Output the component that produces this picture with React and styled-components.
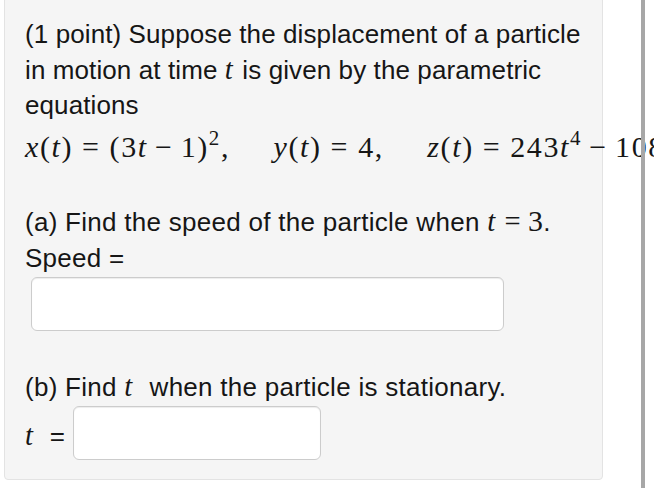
import styled, { createGlobalStyle } from "styled-components";

const GlobalStyle = createGlobalStyle`
  html, body {
    margin: 0;
    padding: 0;
    background: #ffffff;
    overflow: hidden;
  }
  body {
    font-family: "Liberation Sans", Arial, sans-serif;
    color: #161616;
  }
`;

const App = () => {
  return (
    <>
      <GlobalStyle />
      <Page>
        <Card>
          <Prose>
            (1 point) Suppose the displacement of a particle
            <br />
            in motion at time <Var>t</Var> is given by the parametric
            <br />
            equations
          </Prose>
          <MathLine>
            <Var>x</Var>(<Var>t</Var>)<Rel>=</Rel>(3<Var>t</Var>
            <Bin>−</Bin>1)<Sup>2</Sup>,<Quad />
            <Var>y</Var>(<Var>t</Var>)<Rel>=</Rel>4,<Quad />
            <Var>z</Var>(<Var>t</Var>)<Rel>=</Rel>243<Var>t</Var>
            <Sup>4</Sup>
            <Bin>−</Bin>108<Var>t</Var>
            <Sup>2</Sup>
          </MathLine>

          <Question $gap={36}>
            (a) Find the speed of the particle when <Var>t</Var>
            <Rel>=</Rel>
            <Num>3</Num>.
          </Question>
          <Label>Speed =</Label>
          <AnswerInput type="text" $width={473} $indent={6} />

          <Question $gap={38}>
            (b) Find <Var>t</Var>&nbsp; when the particle is stationary.
          </Question>
          <InlineRow>
            <RowLabel>
              <Var>t</Var>&nbsp; =
            </RowLabel>
            <AnswerInput type="text" $width={248} />
          </InlineRow>
        </Card>
        <ScrollBar />
      </Page>
    </>
  );
};

const Page = styled.main`
  position: relative;
  width: 654px;
  height: 495px;
  padding-left: 4px;
  box-sizing: border-box;
`;

const Card = styled.section`
  width: 599px;
  box-sizing: border-box;
  margin-top: -4px;
  padding: 20px 16px 19px 20px;
  background: #f5f5f5;
  border: 1px solid #e3e3e3;
  border-radius: 4px;
  box-shadow: inset 0 1px 1px rgba(0, 0, 0, 0.03);
`;

const Prose = styled.p`
  margin: 0;
  font-size: 26px;
  line-height: 35px;
  letter-spacing: 0.1px;
  white-space: nowrap;
`;

const Var = styled.i`
  font-family: "Liberation Serif", "Times New Roman", serif;
  font-style: italic;
  font-size: 1.1em;
  letter-spacing: 0;
  margin-right: 0.08em;
`;

const MathLine = styled.div`
  margin-top: 4px;
  height: 40px;
  line-height: 40px;
  white-space: nowrap;
  font-family: "Liberation Serif", "Times New Roman", serif;
  font-size: 30px;
  letter-spacing: 1.6px;

  ${Var} {
    font-size: 1em;
    letter-spacing: 1.6px;
    margin-right: 0;
  }
`;

const Rel = styled.span`
  font-family: "Liberation Serif", "Times New Roman", serif;
  margin: 0 0.3em;
`;

const Bin = styled.span`
  margin: 0 0.24em;
`;

const Sup = styled.sup`
  font-size: 0.7em;
  line-height: 0;
  vertical-align: 0.55em;
`;

const Quad = styled.span`
  display: inline-block;
  width: 1.45em;
`;

const Num = styled.span`
  font-family: "Liberation Serif", "Times New Roman", serif;
  font-size: 1.15em;
`;

const Question = styled.p`
  margin: ${(p) => (p.$gap ?? 33)}px 0 0 0;
  font-size: 26px;
  line-height: 35px;
  letter-spacing: 0.28px;
  white-space: nowrap;

  ${Rel} {
    margin: 0 0.25em;
    font-size: 1.1em;
  }
`;

const Label = styled.div`
  margin-top: 1px;
  font-size: 26px;
  line-height: 35px;
  letter-spacing: 0.28px;
`;

const AnswerInput = styled.input`
  display: block;
  box-sizing: border-box;
  width: ${(p) => p.$width}px;
  height: 54px;
  margin: 1px 0 0 ${(p) => p.$indent ?? 0}px;
  padding: 6px 10px;
  background: #ffffff;
  border: 1px solid #cccccc;
  border-radius: 6px;
  box-shadow: inset 0 1px 1px rgba(0, 0, 0, 0.075);
  font-size: 20px;
  outline: none;
`;

const InlineRow = styled.div`
  display: flex;
  align-items: center;
  gap: 8px;
  margin-top: 1px;

  ${AnswerInput} {
    margin: 0;
  }
`;

const RowLabel = styled.span`
  font-size: 26px;
  line-height: 35px;
  white-space: nowrap;
  padding-top: 6px;
`;

const ScrollBar = styled.div`
  position: absolute;
  top: 0;
  left: 641px;
  width: 4px;
  height: 492px;
  background: #a7a7a7;
`;

export default App;
